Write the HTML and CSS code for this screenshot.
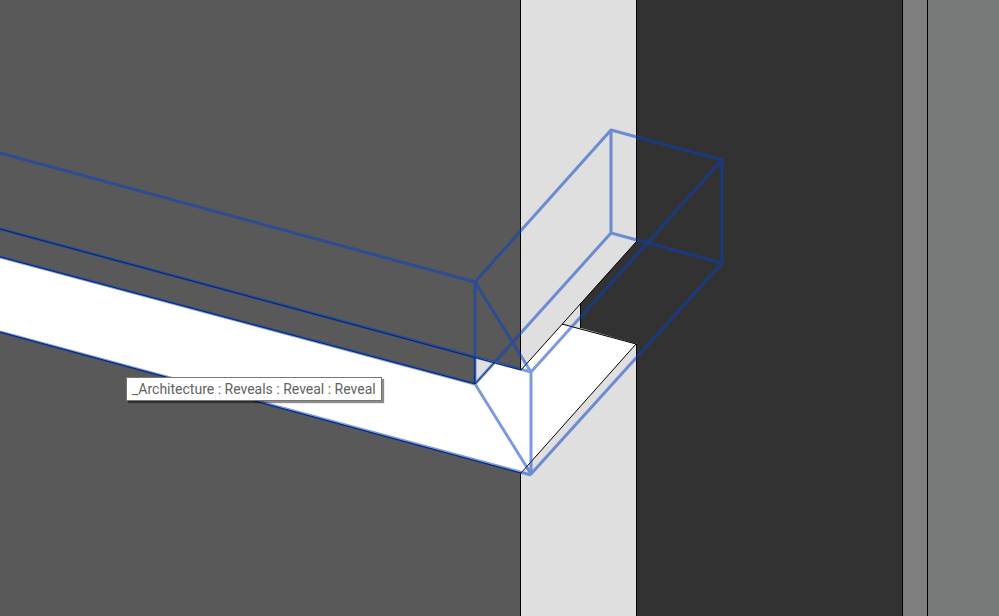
FILE: index.html
```html
<!DOCTYPE html>
<html lang="en">
<head>
  <meta charset="UTF-8" />
  <meta name="viewport" content="width=device-width, initial-scale=1.0" />
  <title>Wall Reveal</title>
  <link rel="stylesheet" href="styles.css">
</head>
<body>
  <main class="viewport">
    <svg class="model" viewBox="0 0 999 616" preserveAspectRatio="xMinYMin slice" aria-label="3D view">
      <!-- wall faces -->
      <rect class="face-front" width="521" height="616" />
      <rect class="face-side" x="521" width="116" height="616" />
      <rect class="face-dark" x="637" width="266" height="616" />
      <rect class="face-trim" x="903" width="25" height="616" />
      <rect class="face-end" x="928" width="71" height="616" />

      <!-- reveal cut -->
      <polygon class="face-dark" points="637,241 581,303 581,328 637,344" />
      <polygon class="face-cut" points="0,257 475,384 495,362 521,370 562,324 636,344 521,473 0,332" />
      <polygon class="face-side" points="475,357 495,362 475,384" />
      <polygon class="face-side" points="581,303 581,328 562,324" />

      <!-- model edges -->
      <g class="edge crisp">
        <path d="M520.5 0V370M520.5 473V616" />
        <path d="M636.5 0V242M636.5 344V616" />
        <path d="M902.5 0V616M927.5 0V616M580.5 303V328" />
      </g>
      <g class="edge">
        <path d="M636 242L521 370M562 324L636 344L521 473" />
        <path d="M0 229L521 370M0 257L475 384L495 362M0 332L521 473M475 357V384" />
      </g>

      <!-- selected sweep -->
      <path class="sweep" d="M0 153L475 282L611 130L722 160V263L531 474L475 384L611 233L722 263M475 282V384M611 130V233M722 160L531 372V474M475 282L531 372L0 229M0 257L475 384M0 332L531 475" />
    </svg>
    <div class="tooltip" role="tooltip">_Architecture : Reveals : Reveal : Reveal</div>
  </main>
</body>
</html>
```
FILE: styles.css
```css
body {
  margin: 0;
  background: #595959;
  font-family: Roboto, "Open Sans", sans-serif;
}
.viewport {
  position: relative;
  height: 100vh;
  overflow: hidden;
}
.model {
  display: block;
  width: 100%;
  height: 100%;
}
.face-front {
  fill: #595959;
}
.face-side {
  fill: #dfdfdf;
}
.face-dark {
  fill: #323232;
}
.face-trim {
  fill: #7f7f7f;
}
.face-end {
  fill: #777a78;
}
.face-cut {
  fill: #ffffff;
}
.edge {
  fill: none;
  stroke: #000000;
  stroke-width: 1;
}
.crisp {
  shape-rendering: crispEdges;
}
.sweep {
  fill: none;
  stroke: rgba(5, 64, 196, 0.53);
  stroke-width: 3;
  stroke-linejoin: round;
}
.tooltip {
  position: absolute;
  left: 126px;
  top: 377px;
  padding: 0 5px;
  border: 1px solid #767676;
  background: #ffffff;
  box-shadow: 2px 2px 1px rgba(0, 0, 0, 0.45);
  color: #636363;
  font-size: 14px;
  line-height: 22px;
  white-space: nowrap;
}
```
